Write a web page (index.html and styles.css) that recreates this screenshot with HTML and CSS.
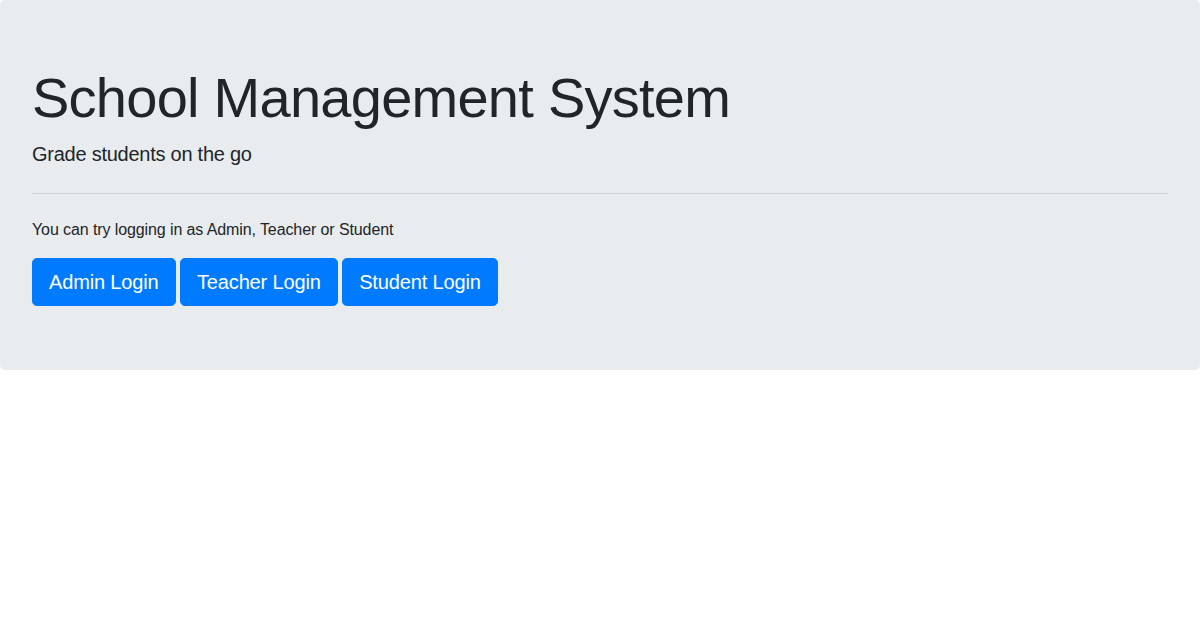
FILE: index.html
```html
<!DOCTYPE html>
<html lang="en">
<head>
<meta charset="utf-8">
<title>School Management System</title>
<link rel="stylesheet" href="styles.css">
</head>
<body>
<div class="jumbotron">
  <h1 class="display">School Management System</h1>
  <p class="lead">Grade students on the go</p>
  <hr class="divider">
  <p class="note">You can try logging in as Admin, Teacher or Student</p>
  <p class="actions">
    <a class="btn" href="#">Admin Login</a>
    <a class="btn" href="#">Teacher Login</a>
    <a class="btn" href="#">Student Login</a>
  </p>
</div>
</body>
</html>
```
FILE: styles.css
```css
html, body {
  margin: 0;
  padding: 0;
  background: #fff;
}
body {
  font-family: "Liberation Sans", Arial, sans-serif;
  font-size: 16px;
  line-height: 1.5;
  color: #212529;
}
.jumbotron {
  background: #e9ecef;
  padding: 64px 32px;
  border-radius: 4.8px;
}
.display {
  margin: 0 0 8px;
  font-size: 56px;
  font-weight: 300;
  line-height: 1.2;
  letter-spacing: -0.74px;
}
.lead {
  margin: 0 0 16px;
  font-size: 20px;
  font-weight: 300;
  letter-spacing: -0.25px;
}
.divider {
  margin: 24px 0;
  border: 0;
  border-top: 1px solid rgba(0, 0, 0, 0.1);
  height: 0;
}
.note {
  margin: 0 0 16px;
  letter-spacing: -0.1px;
}
.actions {
  margin: 0;
}
.btn {
  display: inline-block;
  padding: 8px 16px;
  font-size: 20px;
  line-height: 1.5;
  color: #fff;
  background: #007bff;
  border: 1px solid #007bff;
  border-radius: 4.8px;
  text-decoration: none;
  vertical-align: middle;
  letter-spacing: -0.15px;
}
```
